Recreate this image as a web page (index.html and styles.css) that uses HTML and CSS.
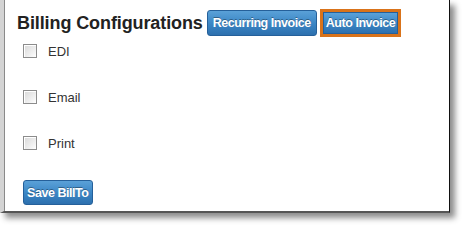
FILE: index.html
```html
<!DOCTYPE html>
<html>
<head>
<meta charset="utf-8">
<link rel="stylesheet" href="styles.css">
</head>
<body>
<div class="frame">
  <div class="panel">
    <div class="header">
      <h1 class="title">Billing Configurations</h1>
      <button class="btn">Recurring Invoice</button>
      <button class="btn btn-focus">Auto Invoice</button>
    </div>
    <ul class="options">
      <li class="option"><span class="check"></span><span class="label">EDI</span></li>
      <li class="option"><span class="check"></span><span class="label">Email</span></li>
      <li class="option"><span class="check"></span><span class="label">Print</span></li>
    </ul>
    <div class="footer">
      <button class="btn btn-save">Save BillTo</button>
    </div>
  </div>
</div>
</body>
</html>
```

FILE: styles.css
```css
html, body {
  margin: 0;
  padding: 0;
  background: #ffffff;
}
body {
  width: 465px;
  height: 229px;
  overflow: hidden;
  font-family: "Liberation Sans", Arial, sans-serif;
}
.frame {
  width: 450px;
  height: 213px;
  box-shadow: 5px 5px 6px rgba(0, 0, 0, 0.45);
}
.panel {
  box-sizing: border-box;
  width: 450px;
  height: 213px;
  background: #fff;
  border-left: 4px solid #d4d4d4;
  border-right: 1px solid #111;
  border-bottom: 2px solid #555;
  box-shadow: inset 1px 0 0 #8a8a8a;
  padding: 8px 0 0 13px;
}
.header {
  display: flex;
  align-items: center;
  gap: 3px;
  height: 30px;
}
.title {
  margin: 0 1px 0 0;
  font-size: 18px;
  font-weight: bold;
  color: #222;
  letter-spacing: -0.1px;
}
.btn {
  font-family: "Liberation Sans", Arial, sans-serif;
  font-size: 12.5px;
  letter-spacing: -0.45px;
  font-weight: bold;
  color: #fff;
  text-shadow: 0 -1px 0 rgba(0, 0, 0, 0.35);
  background: linear-gradient(to bottom, #5aa1d8 0%, #3a85c4 55%, #2d70ae 100%);
  border: 1px solid #25609a;
  border-radius: 3px;
  height: 26px;
  padding: 0 5px;
  margin: 0;
  cursor: pointer;
}
.btn-focus {
  outline: 3px solid #d9731a;
  outline-offset: 0;
  margin-left: 3px;
  height: 22px;
  padding: 0 2px;
  border-radius: 0;
}
.options {
  list-style: none;
  margin: 3px 0 0 0;
  padding: 0 0 0 6px;
  display: flex;
  flex-direction: column;
  gap: 26px;
}
.option {
  display: flex;
  align-items: center;
  height: 20px;
}
.check {
  box-sizing: border-box;
  width: 14px;
  height: 14px;
  border: 1px solid #8c8c8c;
  background: linear-gradient(135deg, #d8d8d8 0%, #f2f2f2 70%, #ffffff 100%);
  box-shadow: inset 1px 1px 0 #fff;
}
.label {
  margin-left: 11px;
  font-size: 13px;
  color: #333;
}
.footer {
  padding: 27px 0 0 6px;
}
.btn-save {
  height: 25px;
  padding: 0 3px;
}
```
